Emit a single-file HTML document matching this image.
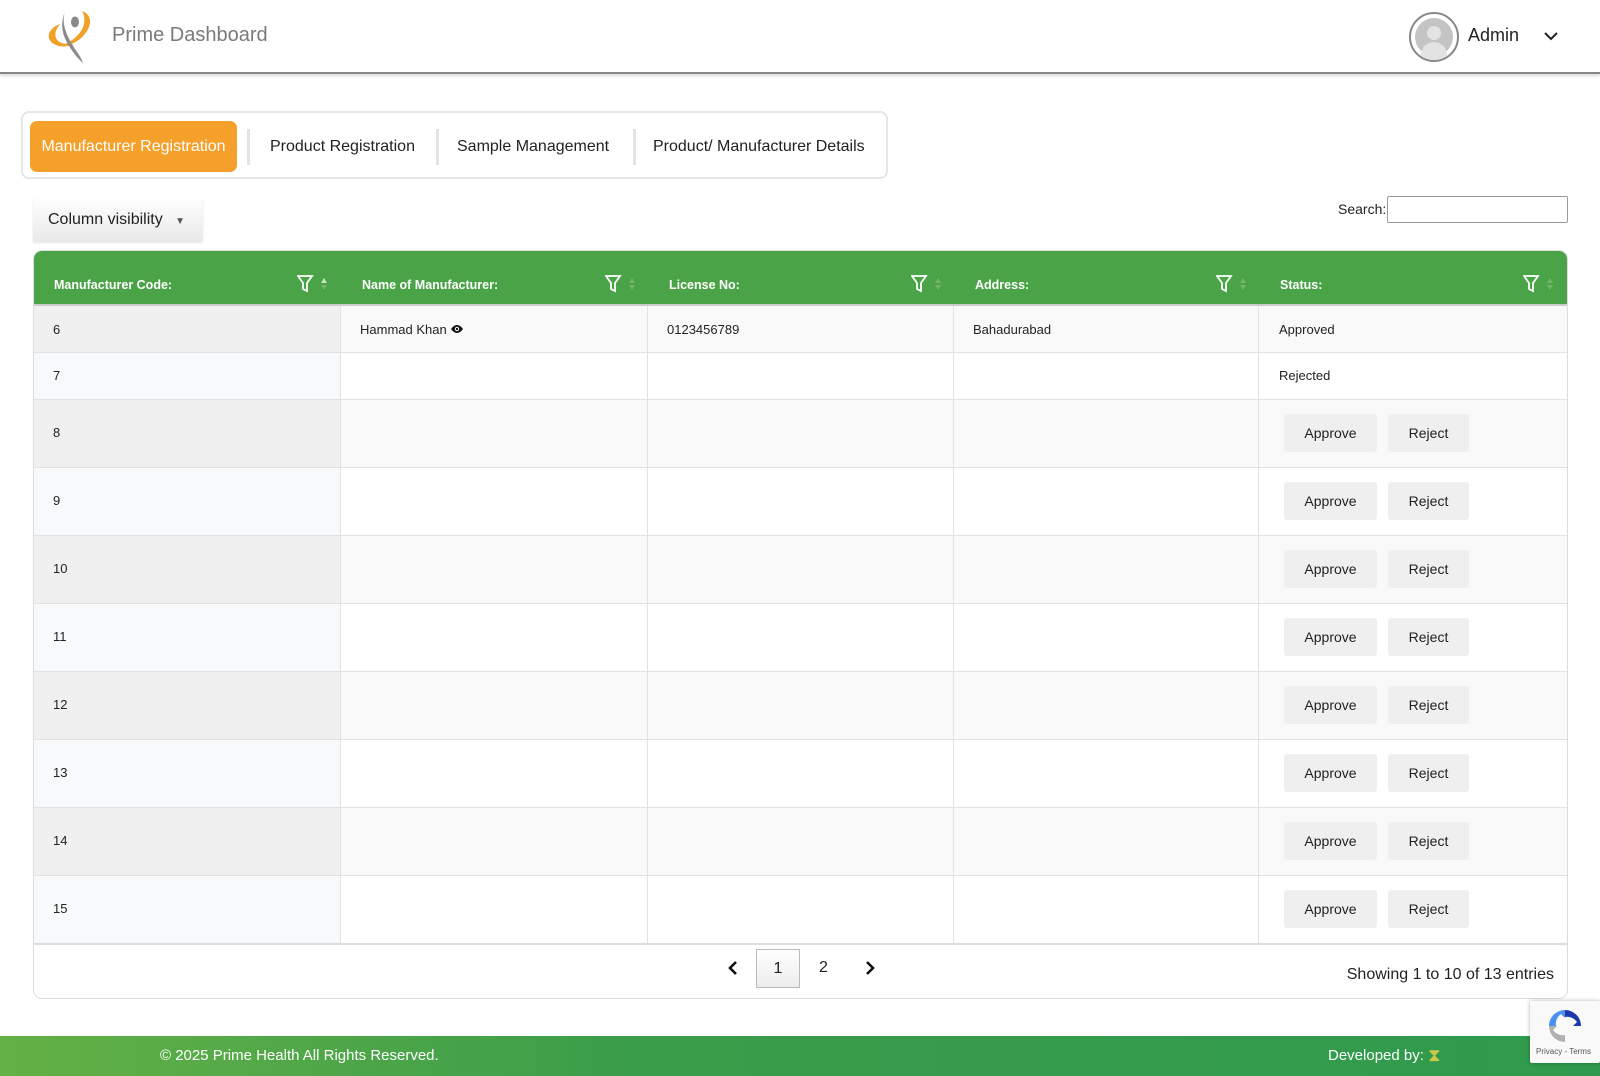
<!DOCTYPE html>
<html><head><meta charset="utf-8"><style>
*{box-sizing:border-box;margin:0;padding:0}
body{width:1600px;height:1076px;overflow:hidden;background:#fff;font-family:"Liberation Sans",sans-serif;color:#222;position:relative}
.hdr{position:absolute;left:0;top:0;width:1600px;height:74px;background:#fff;border-bottom:2px solid #888;box-shadow:0 2px 3px rgba(0,0,0,.15)}
.title{position:absolute;left:112px;top:24px;font-size:20px;color:#7a7a7a}
.admin{position:absolute;left:1468px;top:25px;font-size:18px;color:#222}
.av{position:absolute;left:1409px;top:12px;width:50px;height:50px;border-radius:50%;border:2px solid #888;background:#fff;overflow:hidden}
.tabs{position:absolute;left:21px;top:111px;width:867px;height:68px;border:2px solid #e6e6e6;border-radius:8px;background:#fff}
.tab{position:absolute;top:8px;height:51px;line-height:51px;font-size:16px;color:#222}
.tab.act{left:7px;width:207px;background:#f5a02a;color:#fff;border-radius:7px;text-align:center}
.sep{position:absolute;top:16px;width:3px;height:36px;background:#e3e3e3}
.cv{position:absolute;left:33px;top:197px;width:170px;height:45px;background:linear-gradient(#fff,#e9e9e9);border-radius:2px;font-size:16px;line-height:45px;padding-left:15px;box-shadow:0 1px 2px rgba(0,0,0,.1)}
.search{position:absolute;left:1338px;top:201px;font-size:14px}
.sin{position:absolute;left:1387px;top:196px;width:181px;height:27px;border:1px solid #999;border-radius:2px}
.tbl{position:absolute;left:33px;top:250px;width:1535px;height:749px;border:1px solid #ddd;border-radius:9px;overflow:hidden}
.th{position:absolute;left:0;top:0;width:1535px;height:53px;background:#4aa347}
.th span{position:absolute;top:27px;font-size:12.5px;font-weight:bold;color:#fff}
.row{position:absolute;left:0;width:1535px;border-bottom:1px solid #e2e2e2;font-size:13px}
.c{position:absolute;top:0;bottom:0;border-right:1px solid #e2e2e2}
.txt{position:absolute;left:19px}
.btn{position:absolute;top:14px;height:38px;line-height:38px;background:#efefef;border-radius:3px;text-align:center;font-size:14px}
.pg{position:absolute;top:949px;font-size:16px}
.foot{position:absolute;left:0;top:1036px;width:1600px;height:40px;background:linear-gradient(90deg,#64b146,#3a9d4a 40%,#2f9a4d);color:#fff;font-size:15px}
.fi{position:absolute;top:24px}
</style></head><body>
<div class="hdr">
<svg style="position:absolute;left:44px;top:8px" width="54" height="56" viewBox="0 0 54 56"><path d="M38 3c12 4 10 18-2 28-8 6-16 8-22 7 12-2 24-12 26-22 1-5 0-10-2-13z" fill="#f0a126"/><path d="M16 16c-12 4-16 16-4 21 5 2 12 2 18-1-9 1-16-1-18-6-2-5 1-10 4-14z" fill="#f0a126"/><path d="M21 4c-4 10 1 24 12 40 3 4 5 8 6 11-7-6-15-17-19-27-3-9-2-18 1-24z" fill="#8a8a8a"/><ellipse cx="31" cy="14" rx="4" ry="5.5" fill="#8a8a8a"/></svg>
<div class="title">Prime Dashboard</div>
<div class="av"><div style="position:absolute;left:4px;top:4px;width:38px;height:38px;border-radius:50%;background:#c4c4c4"></div><div style="position:absolute;left:16px;top:12px;width:14px;height:14px;border-radius:50%;background:#e3e3e3"></div><div style="position:absolute;left:10px;top:28px;width:26px;height:18px;border-radius:13px 13px 0 0;background:#e3e3e3"></div></div>
<div class="admin">Admin</div>
<svg style="position:absolute;left:1544px;top:32px" width="14" height="9" viewBox="0 0 14 9"><path d="M1 1l6 6 6-6" stroke="#222" stroke-width="2" fill="none"/></svg>
</div>
<div class="tabs">
<div class="tab act">Manufacturer Registration</div>
<div class="sep" style="left:224px"></div>
<div class="tab" style="left:247px">Product Registration</div>
<div class="sep" style="left:413px"></div>
<div class="tab" style="left:434px">Sample Management</div>
<div class="sep" style="left:610px"></div>
<div class="tab" style="left:630px">Product/ Manufacturer Details</div>
</div>
<div class="cv">Column visibility <span style="font-size:10px;margin-left:8px;color:#555">▼</span></div>
<div class="search">Search:</div><div class="sin"></div>
<div class="tbl">
<div class="th">
<span style="left:20px">Manufacturer Code:</span><span style="left:328px">Name of Manufacturer:</span><span style="left:635px">License No:</span><span style="left:941px">Address:</span><span style="left:1246px">Status:</span>
<svg class="fi" style="left:263px" width="36" height="18"><path d="M1 1h14l-5 7v8l-4-2V8z" stroke="#fff" stroke-width="1.8" fill="none"/><path d="M27 3l3 5h-6z" fill="#c8e6c0"/><path d="M27 15l3-5h-6z" fill="#72b66a"/></svg>
<svg class="fi" style="left:571px" width="36" height="18"><path d="M1 1h14l-5 7v8l-4-2V8z" stroke="#fff" stroke-width="1.8" fill="none"/><path d="M27 3l3 5h-6zM27 15l3-5h-6z" fill="#72b66a"/></svg>
<svg class="fi" style="left:877px" width="36" height="18"><path d="M1 1h14l-5 7v8l-4-2V8z" stroke="#fff" stroke-width="1.8" fill="none"/><path d="M27 3l3 5h-6zM27 15l3-5h-6z" fill="#72b66a"/></svg>
<svg class="fi" style="left:1182px" width="36" height="18"><path d="M1 1h14l-5 7v8l-4-2V8z" stroke="#fff" stroke-width="1.8" fill="none"/><path d="M27 3l3 5h-6zM27 15l3-5h-6z" fill="#72b66a"/></svg>
<svg class="fi" style="left:1489px" width="36" height="18"><path d="M1 1h14l-5 7v8l-4-2V8z" stroke="#fff" stroke-width="1.8" fill="none"/><path d="M27 3l3 5h-6zM27 15l3-5h-6z" fill="#72b66a"/></svg>
</div>
<div class="row" style="top:53px;height:49px;background:#f9f9f9;border-top:2px solid #ccc">
<div class="c" style="left:0;width:307px;background:#f0f0f0"><span class="txt" style="top:16px">6</span></div>
<div class="c" style="left:307px;width:307px"><span class="txt" style="top:16px">Hammad Khan <svg width="14" height="10" viewBox="0 0 14 10" style="vertical-align:0"><path d="M1 5q6-8 12 0q-6 8-12 0z" fill="#111"/><circle cx="7" cy="5" r="2.2" fill="#fff"/><circle cx="7" cy="5" r="1.2" fill="#111"/></svg></span></div>
<div class="c" style="left:614px;width:306px"><span class="txt" style="top:16px">0123456789</span></div>
<div class="c" style="left:920px;width:305px"><span class="txt" style="top:16px">Bahadurabad</span></div>
<span style="position:absolute;left:1245px;top:16px">Approved</span>
</div>
<div class="row" style="top:102px;height:47px;background:#fff">
<div class="c" style="left:0;width:307px;background:#f8f9fb"><span class="txt" style="top:15px">7</span></div>
<div class="c" style="left:307px;width:307px"></div><div class="c" style="left:614px;width:306px"></div><div class="c" style="left:920px;width:305px"></div>
<span style="position:absolute;left:1245px;top:15px">Rejected</span>
</div>
<div id="rows"></div>
<div style="position:absolute;left:0;top:692px;width:1535px;border-top:2px solid #ddd"></div>
<div style="position:absolute;right:13px;top:715px;font-size:16px">Showing 1 to 10 of 13 entries</div>
</div>
<svg class="pg" style="left:727px;top:960px" width="12" height="16"><path d="M9 2L3 8l6 6" stroke="#111" stroke-width="2.6" fill="none"/></svg>
<div class="pg" style="left:756px;width:44px;height:39px;border:1px solid #bbb;background:linear-gradient(#fff,#ececec);text-align:center;line-height:38px">1</div>
<div class="pg" style="left:819px;line-height:38px">2</div>
<svg class="pg" style="left:864px;top:960px" width="12" height="16"><path d="M3 2l6 6-6 6" stroke="#111" stroke-width="2.6" fill="none"/></svg>
<div class="foot"><span style="position:absolute;left:160px;top:11px">© 2025 Prime Health All Rights Reserved.</span><span style="position:absolute;left:1328px;top:11px">Developed by:</span><span style="position:absolute;left:1428px;top:9px;color:#c8c84a;font-size:18px">⧗</span></div>
<div style="position:absolute;left:1530px;top:1001px;width:70px;height:62px;background:#f9f9f9;box-shadow:0 0 4px rgba(0,0,0,.3);border-radius:2px">
<svg style="position:absolute;left:16px;top:6px" width="38" height="38" viewBox="0 0 38 38"><path d="M19 3a16 16 0 0 1 16 16h-8l4-4a12 12 0 0 0-12-5z" fill="#1c3aa9"/><path d="M3 19A16 16 0 0 1 19 3v8l-4-4a12 12 0 0 0-5 12z" fill="#4a90f0"/><path d="M19 35A16 16 0 0 1 3 19h8l-4 4a12 12 0 0 0 12 5z" fill="#b0b0b0"/></svg>
<div style="position:absolute;left:6px;top:46px;font-size:8px;color:#555">Privacy - Terms</div></div>
<script>
var h='',t=149;
for(var i=8;i<=15;i++){var odd=(i%2==0);h+='<div class="row" style="top:'+t+'px;height:68px;background:'+(odd?'#f9f9f9':'#fff')+'"><div class="c" style="left:0;width:307px;background:'+(odd?'#f0f0f0':'#f8f9fb')+'"><span class="txt" style="top:25px">'+i+'</span></div><div class="c" style="left:307px;width:307px"></div><div class="c" style="left:614px;width:306px"></div><div class="c" style="left:920px;width:305px"></div><div class="btn" style="left:1250px;width:93px">Approve</div><div class="btn" style="left:1354px;width:81px">Reject</div></div>';t+=68;}
document.getElementById('rows').outerHTML=h;
</script>
</body></html>
